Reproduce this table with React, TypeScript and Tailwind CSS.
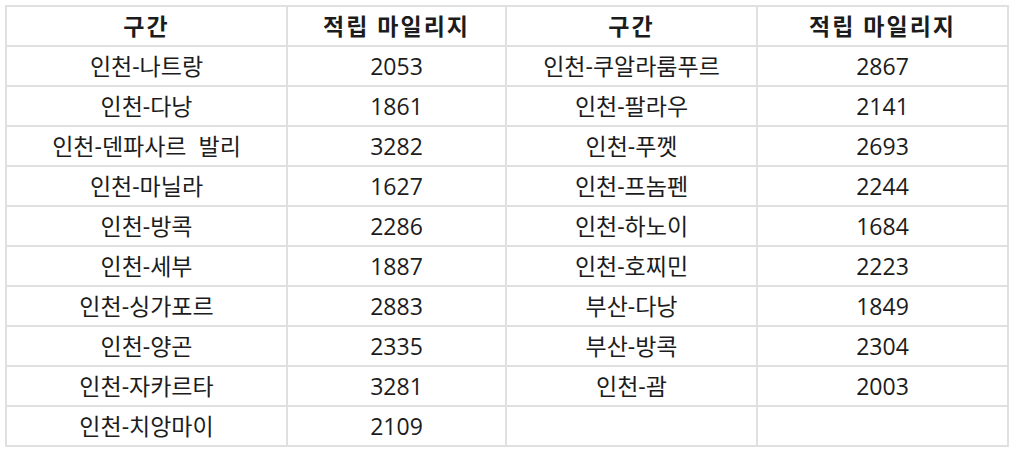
const left: [string, string][] = [
  ["인천-나트랑", "2053"],
  ["인천-다낭", "1861"],
  ["인천-덴파사르 발리", "3282"],
  ["인천-마닐라", "1627"],
  ["인천-방콕", "2286"],
  ["인천-세부", "1887"],
  ["인천-싱가포르", "2883"],
  ["인천-양곤", "2335"],
  ["인천-자카르타", "3281"],
  ["인천-치앙마이", "2109"],
];

const right: [string, string][] = [
  ["인천-쿠알라룸푸르", "2867"],
  ["인천-팔라우", "2141"],
  ["인천-푸껫", "2693"],
  ["인천-프놈펜", "2244"],
  ["인천-하노이", "1684"],
  ["인천-호찌민", "2223"],
  ["부산-다낭", "1849"],
  ["부산-방콕", "2304"],
  ["인천-괌", "2003"],
  ["", ""],
];

const cell = "border-2 border-[#e0e0e0] h-[40px] p-0 text-center align-middle";
const head = cell + " font-bold tracking-[2px]";

export default function App() {
  return (
    <div className="w-[1016px] h-[454px] bg-white pt-[5px] pl-[5px] text-[#1c1c1c] text-[23px] leading-[28px] font-['Open_Sans','Noto_Sans_CJK_KR',sans-serif]">
      <table className="table-fixed border-collapse w-[1002px]">
        <colgroup>
          <col className="w-[281px]" />
          <col className="w-[219px]" />
          <col className="w-[251px]" />
          <col className="w-[251px]" />
        </colgroup>
        <thead>
          <tr>
            <th className={head}>구간</th>
            <th className={head}>적립 마일리지</th>
            <th className={head}>구간</th>
            <th className={head}>적립 마일리지</th>
          </tr>
        </thead>
        <tbody>
          {left.map((row, i) => (
            <tr key={i}>
              <td className={cell}>{row[0].replace(" ", "\u00a0 ")}</td>
              <td className={cell}>{row[1]}</td>
              <td className={cell}>{right[i][0]}</td>
              <td className={cell}>{right[i][1]}</td>
            </tr>
          ))}
        </tbody>
      </table>
    </div>
  );
}
